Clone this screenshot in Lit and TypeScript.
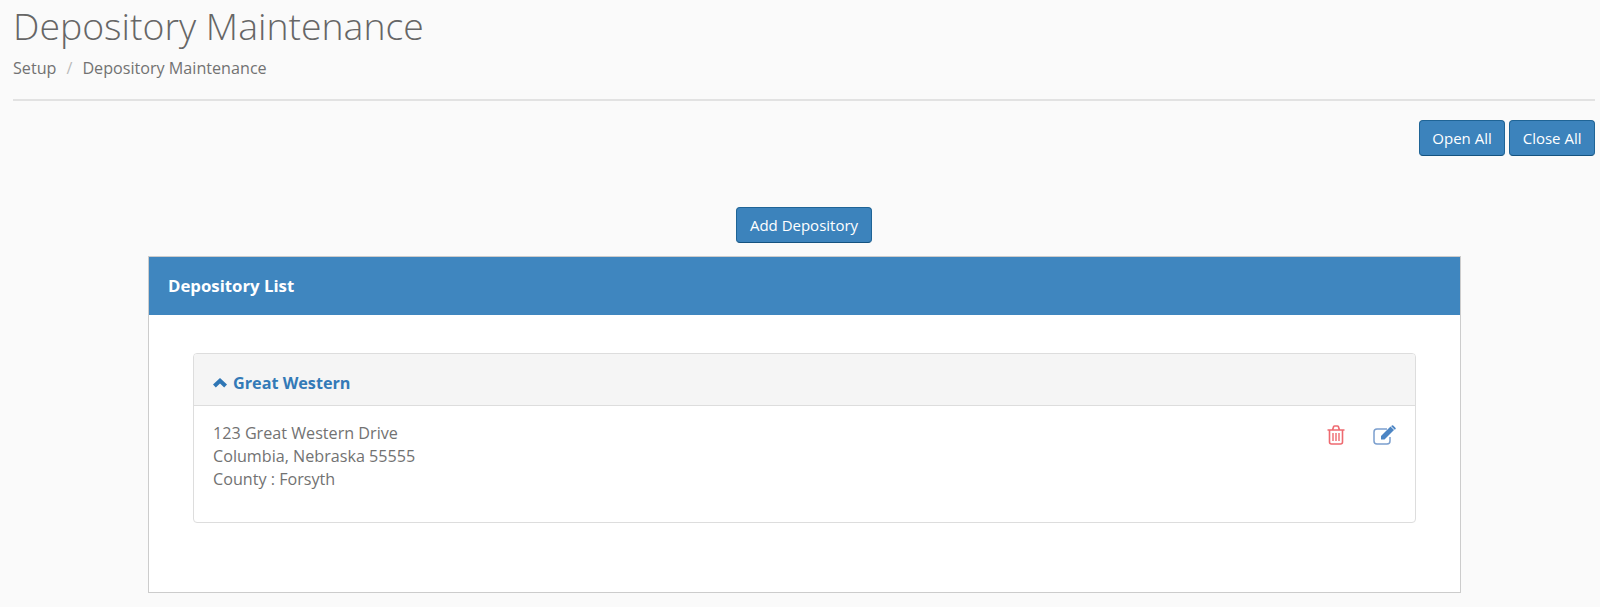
import { LitElement, html, css } from "lit";
import { customElement } from "lit/decorators.js";

@customElement("app-root")
export class AppRoot extends LitElement {
  static styles = css`
    :host { display: block; min-height: 607px; background: #fafafa; font-family: "Open Sans", sans-serif; font-size: 16.15px; color: #727272; overflow: hidden; }
    .page { padding: 0 5px 0 13px; height: 607px; box-sizing: border-box; display: flex; flex-direction: column; }
    h1 { margin: 0; font-size: 37.4px; font-weight: 300; line-height: 52px; color: #666; height: 54px; }
    .crumb { display: flex; gap: 10px; font-size: 16.15px; line-height: 20px; margin-top: 4px; }
    .sep { color: #bbb; }
    .rule { border: 0; border-top: 2px solid #e2e2e2; margin: 21px 0 0; }
    .top { display: flex; justify-content: flex-end; gap: 4px; margin-top: 19px; }
    .btn { background: #3c83bc; border: 1px solid #1f6496; border-bottom-color: #14527f; border-radius: 4px; color: #fff; font: 15px/20px "Open Sans", sans-serif; padding: 7px 13px; }
    .top .btn { padding: 7px 12.5px; }
    .center { display: flex; justify-content: center; margin-top: 51px; }
    .panel { margin: 13px 134px 0 135px; border: 1px solid #ccc; background: #fff; height: 337px; box-sizing: border-box; }
    .ph { background: #3f86bf; color: #fff; font-weight: 700; font-size: 16.8px; height: 58px; box-sizing: border-box; display: flex; align-items: center; padding: 0 19px 2px; }
    .inner { margin: 38px 44px 0; border: 1px solid #ddd; border-radius: 4px; height: 170px; box-sizing: border-box; }
    .ih { height: 52px; background: #f5f5f5; border-bottom: 1px solid #ddd; border-radius: 3px 3px 0 0; display: flex; align-items: center; gap: 6px; padding: 6px 19px 0; font-weight: 700; font-size: 16.2px; color: #337ab7; box-sizing: border-box; }
    .ib { display: flex; justify-content: space-between; padding: 16px 19px 15px; line-height: 23px; }
    .ico { display: flex; gap: 28px; padding-top: 3px; }
    svg { display: block; }
  `;
  render() {
    return html`<div class="page">
      <h1>Depository Maintenance</h1>
      <div class="crumb"><span>Setup</span><span class="sep">/</span><span>Depository Maintenance</span></div>
      <hr class="rule" />
      <div class="top"><button class="btn">Open All</button><button class="btn">Close All</button></div>
      <div class="center"><button class="btn">Add Depository</button></div>
      <div class="panel">
        <div class="ph">Depository List</div>
        <div class="inner">
          <div class="ih">
            <svg width="14" height="10" viewBox="0 0 14 10"><path d="M7 0 14 6.6 11.2 9.6 7 5.6 2.8 9.6 0 6.6z" fill="#2f76b5"/></svg>
            Great Western
          </div>
          <div class="ib">
            <div>123 Great Western Drive<br />Columbia, Nebraska 55555<br />County : Forsyth</div>
            <div class="ico">
              <svg width="18" height="20" viewBox="0 0 18 20" fill="none" stroke="#ee6a70" stroke-width="1.6"><path d="M0.5 5h17M5.5 5l1-3a1 1 0 0 1 1-1h3a1 1 0 0 1 1 1l1 3M2.5 5v12a2 2 0 0 0 2 2h9a2 2 0 0 0 2-2V5"/><path d="M6 8v8M9 8v8M12 8v8" stroke-width="1.4"/></svg>
              <svg width="23" height="20" viewBox="0 0 23 20" fill="none"><path d="M17 12v4a3 3 0 0 1-3 3H4a3 3 0 0 1-3-3V7a3 3 0 0 1 3-3h10" stroke="#7b9fce" stroke-width="1.5"/><path d="M8 11 17.5 1.5l3.5 3.5L11.5 14.5H8z" fill="#4c85c4"/><path d="M18.8 0.6a1 1 0 0 1 1.4 0l2.2 2.2a1 1 0 0 1 0 1.4L21.8 4.8 18.2 1.2z" fill="#4c85c4"/></svg>
            </div>
          </div>
        </div>
      </div>
    </div>`;
  }
}
